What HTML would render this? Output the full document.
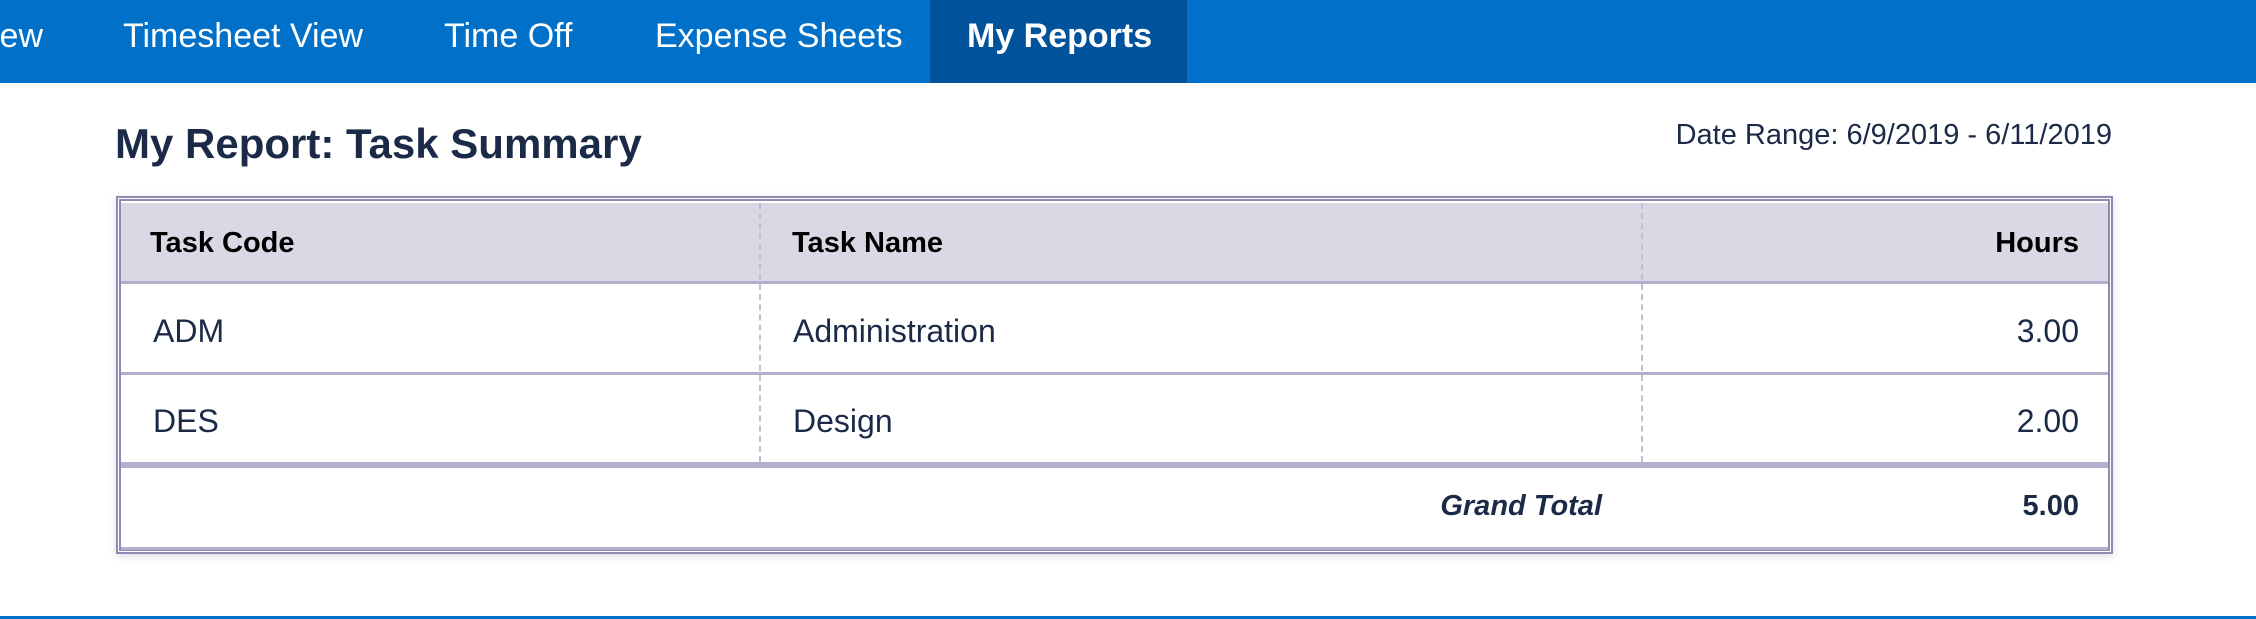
<!DOCTYPE html>
<html><head><meta charset="utf-8"><style>
*{margin:0;padding:0;box-sizing:border-box}
body{width:2256px;height:619px;background:#fff;position:relative;overflow:hidden;font-family:"Liberation Sans",sans-serif;color:#1b2a47}
.nav{position:absolute;left:0;top:0;width:2256px;height:83px;background:#0070c8}
.act{position:absolute;left:930px;top:0;width:257px;height:83px;background:#00539a}
.ni{position:absolute;top:16px;color:#fff;font-size:34px;line-height:40px;white-space:nowrap}
.t{position:absolute;white-space:nowrap}
.ln{position:absolute;background:#b0afcc}
.dv{position:absolute;width:0;border-left:2px dashed #c0bfd6}
</style></head><body>
<div class="nav"></div><div class="act"></div>
<div class="ni" style="left:-8px">iew</div>
<div class="ni" style="left:123px">Timesheet View</div>
<div class="ni" style="left:444px">Time Off</div>
<div class="ni" style="left:655px">Expense Sheets</div>
<div class="ni" style="left:967px;font-weight:bold">My Reports</div>

<div class="t" style="left:115px;top:120px;font-size:42px;font-weight:bold">My Report: Task Summary</div>
<div class="t" style="right:144px;top:119px;font-size:29px">Date Range: 6/9/2019 - 6/11/2019</div>

<div style="position:absolute;left:116px;top:196px;width:1997px;height:358px;border:2px solid #8c8bb5;box-shadow:0 2px 8px rgba(0,0,0,.15)"></div>
<div style="position:absolute;left:119px;top:199px;width:1991px;height:352px;border:2px solid #8c8bb5;background:#fff"></div>
<div style="position:absolute;left:121px;top:203px;width:1987px;height:79px;background:#d9d9e5"></div>
<div class="ln" style="left:121px;top:281px;width:1987px;height:3px"></div>
<div class="ln" style="left:121px;top:372px;width:1987px;height:3px"></div>
<div class="ln" style="left:121px;top:462px;width:1987px;height:6px"></div>
<div class="ln" style="left:121px;top:547px;width:1987px;height:3px"></div>
<div class="dv" style="left:759px;top:203px;height:259px"></div>
<div class="dv" style="left:1641px;top:203px;height:259px"></div>

<div class="t" style="left:150px;top:227px;font-size:29px;font-weight:bold;color:#000">Task Code</div>
<div class="t" style="left:792px;top:227px;font-size:29px;font-weight:bold;color:#000">Task Name</div>
<div class="t" style="right:177px;top:227px;font-size:29px;font-weight:bold;color:#000">Hours</div>

<div class="t" style="left:153px;top:313px;font-size:32px">ADM</div>
<div class="t" style="left:793px;top:313px;font-size:32px">Administration</div>
<div class="t" style="right:177px;top:313px;font-size:32px">3.00</div>

<div class="t" style="left:153px;top:403px;font-size:32px">DES</div>
<div class="t" style="left:793px;top:403px;font-size:32px">Design</div>
<div class="t" style="right:177px;top:403px;font-size:32px">2.00</div>

<div class="t" style="right:654px;top:490px;font-size:29px;font-weight:bold;font-style:italic">Grand Total</div>
<div class="t" style="right:177px;top:490px;font-size:29px;font-weight:bold">5.00</div>

<div style="position:absolute;left:0;top:616px;width:2256px;height:3px;background:#0070c8"></div>
</body></html>
